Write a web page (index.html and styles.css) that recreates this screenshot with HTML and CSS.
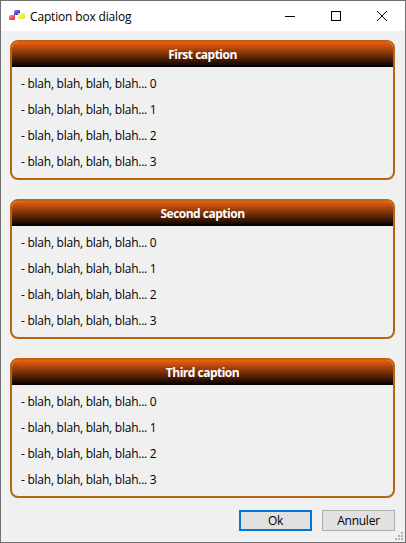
FILE: index.html
```html
<!DOCTYPE html>
<html lang="en">
<head>
    <meta charset="UTF-8">
    <title>Caption box dialog</title>
    <link rel="stylesheet" href="styles.css">
</head>
<body>
    <div class="dialog">
        <div class="title-bar">
            <svg class="app-icon" width="16" height="16" viewBox="0 0 16 16">
                <defs>
                    <linearGradient id="blue-cube" x1="0" y1="0" x2="1" y2="1">
                        <stop offset="0" stop-color="#8a8af0"/>
                        <stop offset="1" stop-color="#2020c0"/>
                    </linearGradient>
                    <linearGradient id="red-cube" x1="0" y1="0" x2="1" y2="1">
                        <stop offset="0" stop-color="#f8a0a8"/>
                        <stop offset="1" stop-color="#e81030"/>
                    </linearGradient>
                    <linearGradient id="yellow-cube" x1="0" y1="0" x2="1" y2="1">
                        <stop offset="0" stop-color="#fbf8a0"/>
                        <stop offset="1" stop-color="#eee010"/>
                    </linearGradient>
                </defs>
                <path d="M5 3l1-1h5v4l-1 1H5z" fill="url(#blue-cube)"/>
                <path d="M0 8l1-1h5v4l-1 1H0z" fill="url(#red-cube)"/>
                <path d="M9 6l1-1h6v5l-1 1H9z" fill="url(#yellow-cube)"/>
            </svg>
            <span class="title-text">Caption box dialog</span>
            <div class="window-buttons">
                <div class="win-btn">
                    <svg width="12" height="12" viewBox="0 0 12 12"><path d="M1 6.5h10" stroke="#000" fill="none"/></svg>
                </div>
                <div class="win-btn">
                    <svg width="12" height="12" viewBox="0 0 12 12"><rect x="1.5" y="1.5" width="9" height="9" stroke="#000" fill="none"/></svg>
                </div>
                <div class="win-btn">
                    <svg width="12" height="12" viewBox="0 0 12 12"><path d="M1 1l10 10M11 1L1 11" stroke="#000" fill="none"/></svg>
                </div>
            </div>
        </div>
        <div class="content">
            <div class="caption-box">
                <div class="caption">First caption</div>
                <div class="rows">
                    <div class="row">- blah, blah, blah, blah... 0</div>
                    <div class="row">- blah, blah, blah, blah... 1</div>
                    <div class="row">- blah, blah, blah, blah... 2</div>
                    <div class="row">- blah, blah, blah, blah... 3</div>
                </div>
            </div>
            <div class="caption-box">
                <div class="caption">Second caption</div>
                <div class="rows">
                    <div class="row">- blah, blah, blah, blah... 0</div>
                    <div class="row">- blah, blah, blah, blah... 1</div>
                    <div class="row">- blah, blah, blah, blah... 2</div>
                    <div class="row">- blah, blah, blah, blah... 3</div>
                </div>
            </div>
            <div class="caption-box">
                <div class="caption">Third caption</div>
                <div class="rows">
                    <div class="row">- blah, blah, blah, blah... 0</div>
                    <div class="row">- blah, blah, blah, blah... 1</div>
                    <div class="row">- blah, blah, blah, blah... 2</div>
                    <div class="row">- blah, blah, blah, blah... 3</div>
                </div>
            </div>
            <div class="buttons">
                <button class="btn btn-default">Ok</button>
                <button class="btn">Annuler</button>
            </div>
            <svg class="grip" width="9" height="9" viewBox="0 0 9 9">
                <path d="M6 0h2v2H6zM3 3h2v2H3zM6 3h2v2H6zM0 6h2v2H0zM3 6h2v2H3zM6 6h2v2H6z" fill="#b4b4b4"/>
            </svg>
        </div>
    </div>
</body>
</html>
```

FILE: styles.css
```css
* {
    margin: 0;
    padding: 0;
    box-sizing: border-box;
}

html, body {
    height: 100%;
}

body {
    font-family: "Open Sans", "Noto Sans", sans-serif;
    font-size: 12px;
    letter-spacing: -0.25px;
    color: #000;
    overflow: hidden;
}

.dialog {
    height: 543px;
    display: flex;
    flex-direction: column;
    border: 1px solid #707070;
    background: #f0f0f0;
}

.title-bar {
    height: 30px;
    flex: none;
    display: flex;
    align-items: center;
    background: #fff;
    padding-left: 8px;
}

.app-icon {
    flex: none;
}

.title-text {
    margin-left: 5px;
    letter-spacing: -0.17px;
}

.window-buttons {
    display: flex;
    margin-left: auto;
    height: 100%;
}

.win-btn {
    width: 46px;
    display: flex;
    align-items: center;
    justify-content: center;
}

.content {
    flex: 1;
    position: relative;
    padding: 9px 10px 0 9px;
    display: flex;
    flex-direction: column;
    gap: 19px;
}

.caption-box {
    height: 140px;
    border: 2px solid #b5660f;
    border-radius: 8px;
    overflow: hidden;
}

.caption {
    height: 25px;
    display: flex;
    align-items: center;
    justify-content: center;
    background: linear-gradient(#ee5f10, #000);
    color: #fff;
    font-size: 12px;
    font-weight: bold;
    letter-spacing: -0.5px;
}

.rows {
    display: flex;
    flex-direction: column;
    padding: 3px 0 0 9px;
}

.row {
    height: 26px;
    line-height: 28px;
}

.buttons {
    display: flex;
    justify-content: flex-end;
    gap: 10px;
    margin-top: -7px;
}

.btn {
    width: 73px;
    height: 21px;
    border: 1px solid #adadad;
    background: #e1e1e1;
    font-family: inherit;
    font-size: 12px;
    letter-spacing: -0.25px;
    color: #000;
}

.btn-default {
    border: 2px solid #0078d7;
}

.grip {
    position: absolute;
    right: 1px;
    bottom: 1px;
}
```
